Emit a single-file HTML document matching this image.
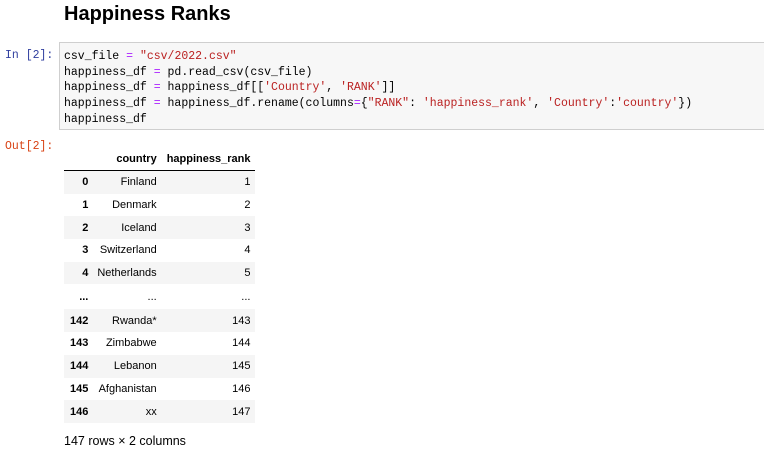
<!DOCTYPE html>
<html><head><style>
body{margin:0;width:764px;height:458px;background:#fff;font-family:"Liberation Sans",Arial,sans-serif;position:relative;overflow:hidden}
h1{position:absolute;left:64px;top:3px;margin:0;font-size:20px;font-weight:bold;color:#000}
.pr{position:absolute;font-family:"Liberation Mono",monospace;font-size:11.5px}
.in{color:#303f9f;left:5px;top:49px}
.out{color:#d84315;left:5px;top:140px}
.code{position:absolute;left:59px;top:42px;width:710px;height:88px;background:#f7f7f7;border:1px solid #cfcfcf;box-sizing:border-box;padding:6px 0 0 4px;font-family:"Liberation Mono",monospace;font-size:11.5px;line-height:15.7px;white-space:pre;color:#000}
.s{color:#ba2121}.o{color:#aa22ff}
table{position:absolute;left:64px;top:147px;border-collapse:collapse;font-size:11px;color:#000}
th,td{text-align:right;padding:0 5px;height:22.7px;white-space:nowrap}
thead th{border-bottom:1px solid #000;height:23px}
tbody tr:nth-child(odd){background:#f5f5f5}
tbody th{font-weight:bold;padding-left:6px;padding-right:4px}
.foot{position:absolute;left:64px;top:434px;font-size:12.5px}
</style></head><body>
<h1>Happiness Ranks</h1>
<div class="pr in">In [2]:</div>
<div class="code">csv_file <span class="o">=</span> <span class="s">"csv/2022.csv"</span>
happiness_df <span class="o">=</span> pd.read_csv(csv_file)
happiness_df <span class="o">=</span> happiness_df[[<span class="s">'Country'</span>, <span class="s">'RANK'</span>]]
happiness_df <span class="o">=</span> happiness_df.rename(columns<span class="o">=</span>{<span class="s">"RANK"</span>: <span class="s">'happiness_rank'</span>, <span class="s">'Country'</span>:<span class="s">'country'</span>})
happiness_df</div>
<div class="pr out">Out[2]:</div>
<table>
<thead><tr><th></th><th>country</th><th>happiness_rank</th></tr></thead>
<tbody>
<tr><th>0</th><td>Finland</td><td>1</td></tr>
<tr><th>1</th><td>Denmark</td><td>2</td></tr>
<tr><th>2</th><td>Iceland</td><td>3</td></tr>
<tr><th>3</th><td>Switzerland</td><td>4</td></tr>
<tr><th>4</th><td>Netherlands</td><td>5</td></tr>
<tr style="height:25px"><th>...</th><td>...</td><td>...</td></tr>
<tr><th>142</th><td>Rwanda*</td><td>143</td></tr>
<tr><th>143</th><td>Zimbabwe</td><td>144</td></tr>
<tr><th>144</th><td>Lebanon</td><td>145</td></tr>
<tr><th>145</th><td>Afghanistan</td><td>146</td></tr>
<tr><th>146</th><td>xx</td><td>147</td></tr>
</tbody></table>
<div class="foot">147 rows × 2 columns</div>
</body></html>
